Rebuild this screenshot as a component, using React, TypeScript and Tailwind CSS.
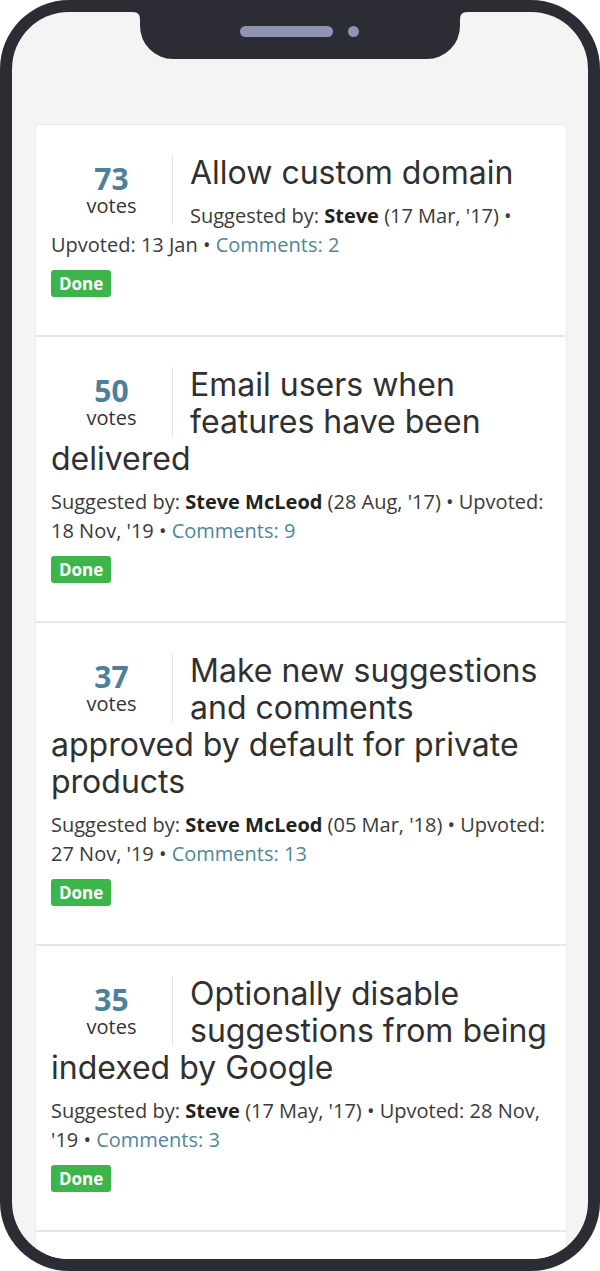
import React from "react";

type Item = {
  votes: number;
  title: string;
  author: string;
  date: string;
  upvoted: string;
  comments: number;
};

const items: Item[] = [
  { votes: 73, title: "Allow custom domain", author: "Steve", date: "17 Mar, '17", upvoted: "13 Jan", comments: 2 },
  { votes: 50, title: "Email users when features have been delivered", author: "Steve McLeod", date: "28 Aug, '17", upvoted: "18 Nov, '19", comments: 9 },
  { votes: 37, title: "Make new suggestions and comments approved by default for private products", author: "Steve McLeod", date: "05 Mar, '18", upvoted: "27 Nov, '19", comments: 13 },
  { votes: 35, title: "Optionally disable suggestions from being indexed by Google", author: "Steve", date: "17 May, '17", upvoted: "28 Nov, '19", comments: 3 },
];

function Notch() {
  return (
    <svg
      className="absolute left-[121px] top-0"
      width="334"
      height="48"
      viewBox="0 0 334 48"
      fill="none"
    >
      <path
        d="M0 0 H334 Q327 0 327 7 V14 A33 33 0 0 1 294 47 H40 A33 33 0 0 1 7 14 V7 Q7 0 0 0 Z"
        fill="#2b2c34"
      />
      <rect x="107" y="14" width="93" height="11" rx="5.5" fill="#9094b2" />
      <circle cx="220.5" cy="19.5" r="5.5" fill="#9094b2" />
    </svg>
  );
}

function Suggestion({ item }: { item: Item }) {
  return (
    <div className="border-b-2 border-[#e6e6e6] px-[15px] pt-[29px] pb-[38px]">
      <div className="float-left mt-[1px] mr-[17px] w-[122px] border-r border-[#e3e3e3] py-[8px] text-center">
        <div className="text-[30px] leading-[32px] font-bold text-[#4b8199]">{item.votes}</div>
        <div className="text-[20px] leading-[22px] text-[#333333]">votes</div>
      </div>
      <h2 className="font-['Inter',sans-serif] text-[32px] leading-[37px] font-normal text-[#303030]">
        {item.title}
      </h2>
      <p className="mt-[10px] text-[20px] leading-[29px] text-[#3a3a3a]">
        Suggested by: <b className="font-bold text-[#222222]">{item.author}</b> ({item.date}) • Upvoted:{" "}
        {item.upvoted} • <a className="text-[#4e869b]">Comments: {item.comments}</a>
      </p>
      <div className="clear-both flex pt-[11px]">
        <span className="rounded-[3px] bg-[#3cb64b] px-[8px] text-[17px] leading-[27px] font-bold text-white">
          Done
        </span>
      </div>
    </div>
  );
}

export default function App() {
  return (
    <div className="h-[1271px] w-[600px] bg-white font-['Open_Sans',sans-serif]">
      <div className="h-full rounded-[69px] bg-[#2b2c34] p-[12px]">
        <div className="relative h-full overflow-hidden rounded-[57px] bg-[#f4f4f4] pt-[112px]">
          <Notch />
          <div className="ml-[23px] w-[532px] rounded-t-[4px] border border-b-0 border-[#ebebeb] bg-white">
            {items.map((item) => (
              <Suggestion key={item.votes} item={item} />
            ))}
            <div className="h-[80px]" />
          </div>
        </div>
      </div>
    </div>
  );
}
